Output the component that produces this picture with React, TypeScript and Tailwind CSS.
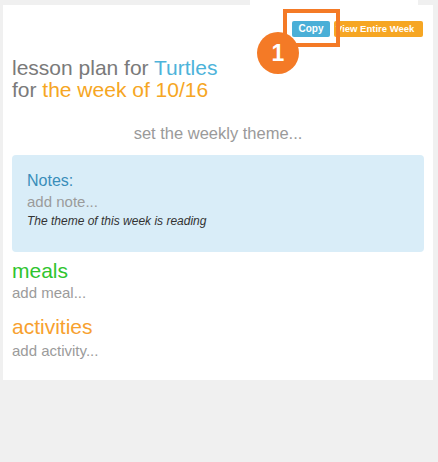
export default function App() {
  return (
    <div className="relative h-[462px] w-[438px] overflow-hidden bg-[#f0f0f0] font-['Liberation_Sans',Arial,sans-serif]">
      {/* scroll strip above the panel */}
      <div className="absolute left-[250px] top-0 h-[5px] w-[168px] bg-white" />

      <div className="relative ml-[3px] mt-[5px] h-[375px] w-[430px] bg-white px-[9px]">
        <div className="flex justify-end gap-[4px] pr-[1px] pt-[16px]">
          <button className="h-[16px] w-[38px] rounded-[2px] bg-[#4aafd7] text-[10px] font-bold leading-[16px] text-white">
            Copy
          </button>
          <button className="h-[16px] w-[89px] rounded-[2px] bg-[#f6a623] pl-[2px] text-left text-[9.5px] font-bold leading-[16px] text-white">
            View Entire Week
          </button>
        </div>

        <h1 className="mt-[20px] text-[21px] leading-[22px] text-[#7a7a7a]">
          lesson plan for <span className="text-[#4db3da]">Turtles</span>
          <br />
          for <span className="text-[#f6a623]">the week of 10/16</span>
        </h1>

        <p className="mt-[22px] text-center text-[16.5px] leading-[20px] text-[#9a9a9a]">
          set the weekly theme...
        </p>

        <div className="mt-[12px] h-[97px] rounded-[4px] bg-[#d9edf8] px-[15px] pt-[16px]">
          <div className="text-[16px] leading-[20px] text-[#3a8dba]">Notes:</div>
          <div className="text-[15px] leading-[22px] text-[#9b9b9b]">add note...</div>
          <div className="text-[12px] italic leading-[16px] text-[#333]">
            The theme of this week is reading
          </div>
        </div>

        <div className="mt-[7px] text-[21px] leading-[24px] text-[#2fc42f]">meals</div>
        <div className="text-[15px] leading-[20px] text-[#9b9b9b]">add meal...</div>

        <div className="mt-[12px] text-[21px] leading-[24px] text-[#f7a12f]">activities</div>
        <div className="mt-[2px] text-[15px] leading-[20px] text-[#9b9b9b]">add activity...</div>

        {/* tutorial highlight */}
        <div className="absolute left-[280px] top-[4px] h-[38px] w-[57px] border-[4px] border-[#f47a26]" />
        <div className="absolute left-[254px] top-[27px] flex h-[42px] w-[42px] items-center justify-center rounded-full bg-[#f47a26] text-[23px] font-bold text-white">
          1
        </div>
      </div>
    </div>
  );
}
